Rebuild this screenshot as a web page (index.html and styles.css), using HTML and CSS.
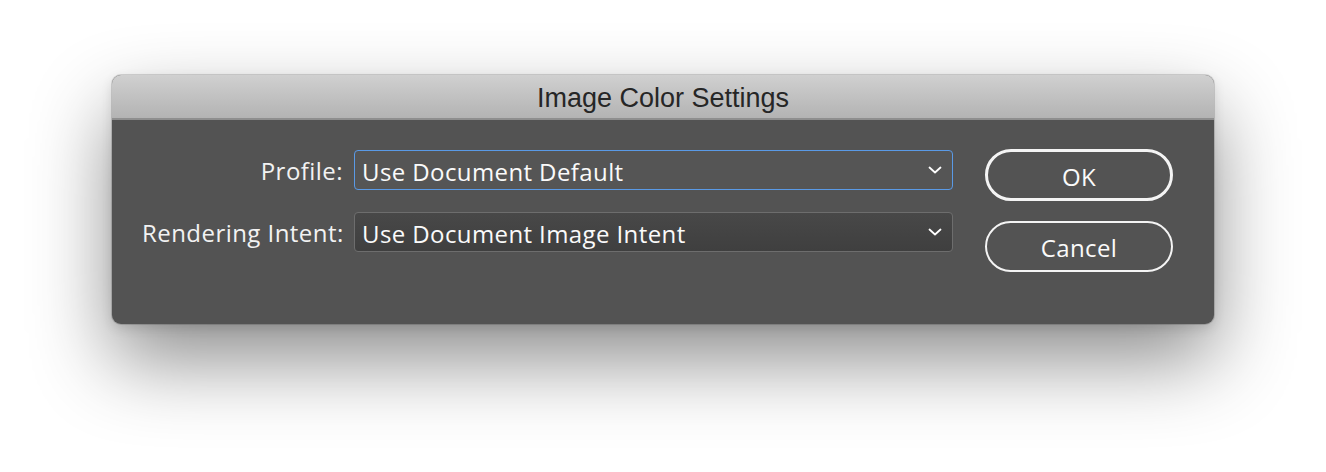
FILE: index.html
```html
<!DOCTYPE html>
<html>
<head>
<meta charset="utf-8">
<link rel="stylesheet" href="styles.css">
</head>
<body>
<div class="stage">
  <div class="dialog">
    <div class="titlebar">Image Color Settings</div>
    <div class="content">
      <div class="fields">
        <div class="row">
          <label class="label">Profile:</label>
          <div class="select focused">
            <span class="value">Use Document Default</span>
            <svg class="chev" width="14" height="8" viewBox="0 0 14 8"><path d="M1.5 1.5 L7 6.5 L12.5 1.5" fill="none" stroke="#fff" stroke-width="1.8" stroke-linecap="round" stroke-linejoin="round"/></svg>
          </div>
        </div>
        <div class="row">
          <label class="label">Rendering Intent:</label>
          <div class="select dark">
            <span class="value">Use Document Image Intent</span>
            <svg class="chev" width="14" height="8" viewBox="0 0 14 8"><path d="M1.5 1.5 L7 6.5 L12.5 1.5" fill="none" stroke="#fff" stroke-width="1.8" stroke-linecap="round" stroke-linejoin="round"/></svg>
          </div>
        </div>
      </div>
      <div class="buttons">
        <div class="btn primary">OK</div>
        <div class="btn">Cancel</div>
      </div>
    </div>
  </div>
</div>
</body>
</html>
```
FILE: styles.css
```css
html, body {
  margin: 0;
  padding: 0;
}
body {
  width: 1326px;
  height: 472px;
  background: #ffffff;
  font-family: "Open Sans", "Noto Sans", sans-serif;
  overflow: hidden;
}
.stage {
  padding: 75px 0 0 112px;
}
.dialog {
  width: 1102px;
  height: 249px;
  box-sizing: border-box;
  border-radius: 9px;
  overflow: hidden;
  background: #535353;
  box-shadow: 0 0 0 1px rgba(0,0,0,0.14), 0 36px 80px rgba(0,0,0,0.45), 0 4px 12px rgba(0,0,0,0.12);
}
.titlebar {
  height: 43px;
  border-bottom: 2px solid #8e8e8e;
  background: linear-gradient(#d0d0d0, #b3b3b3);
  color: #262626;
  font-family: "Liberation Sans", sans-serif;
  font-size: 27px;
  text-align: center;
  line-height: 46px;
  box-sizing: content-box;
}
.content {
  display: flex;
  padding: 30px 0 0 30px;
}
.fields {
  display: flex;
  flex-direction: column;
  gap: 22px;
}
.row {
  display: flex;
  align-items: center;
  gap: 11px;
  height: 40px;
}
.label {
  width: 201px;
  text-align: right;
  color: #f2f2f2;
  font-size: 24px;
  letter-spacing: 0.45px;
  white-space: nowrap;
  line-height: 38px;
  padding-top: 2px;
}
.select {
  width: 599px;
  height: 40px;
  box-sizing: border-box;
  border-radius: 4px;
  display: flex;
  align-items: center;
  justify-content: space-between;
  padding: 2px 10px 0 7px;
  color: #fafafa;
  font-size: 24px;
  letter-spacing: 0.4px;
}
.select .chev {
  margin-top: -2px;
}
.select.focused {
  background: #555555;
  border: 1.5px solid #5a9ae6;
}
.select.dark {
  background: linear-gradient(#484848, #3f3f3f);
  border: 1.5px solid #6d6d6d;
}
.chev {
  display: block;
}
.buttons {
  display: flex;
  flex-direction: column;
  gap: 20px;
  margin-left: 32px;
  margin-top: -1px;
}
.btn {
  width: 188px;
  height: 51px;
  box-sizing: border-box;
  border-radius: 26px;
  border: 2px solid #f4f4f4;
  color: #fafafa;
  font-size: 24px;
  letter-spacing: 0.4px;
  display: flex;
  align-items: center;
  justify-content: center;
  padding-top: 2px;
}
.btn.primary {
  border-width: 3px;
  height: 52px;
}
```
